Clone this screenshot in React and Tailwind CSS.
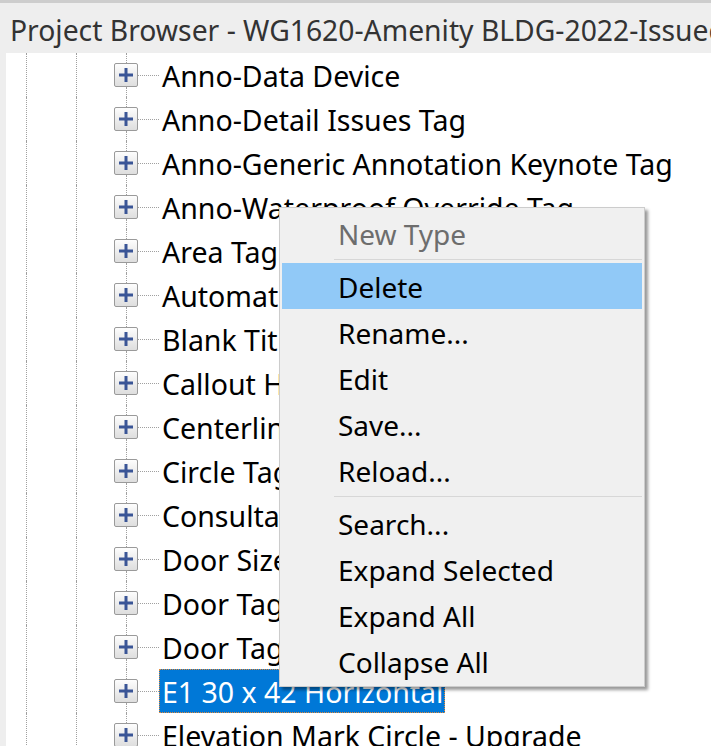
import React from "react";

const rows = [
  "Anno-Data Device",
  "Anno-Detail Issues Tag",
  "Anno-Generic Annotation Keynote Tag",
  "Anno-Waterproof Override Tag",
  "Area Tag",
  "Automatic Sheet Number",
  "Blank Title Block",
  "Callout Head",
  "Centerline",
  "Circle Tag",
  "Consultant Logo",
  "Door Size Tag",
  "Door Tag",
  "Door Tag - Small",
  "E1 30 x 42 Horizontal",
  "Elevation Mark Circle - Upgrade",
];

const font = { fontFamily: '"Segoe UI", "Noto Sans", "Open Sans", sans-serif' };

function PlusBox() {
  return (
    <div className="w-[24px] h-[24px] border border-[#9a9a9a] rounded-[2px] bg-gradient-to-b from-[#fdfdfd] to-[#dedede] flex items-center justify-center">
      <svg width="14" height="14" viewBox="0 0 14 14">
        <rect x="0" y="5.5" width="14" height="3" fill="#3a5596" />
        <rect x="5.5" y="0" width="3" height="14" fill="#3a5596" />
      </svg>
    </div>
  );
}

function Row({ label, selected }) {
  return (
    <div className="flex h-[44px] items-stretch">
      <div className="w-[20px]" />
      <div className="w-[50px] border-l border-dotted border-[#a0a0a0]" />
      <div className="w-[38px] border-l border-dotted border-[#a0a0a0]" />
      <div className="w-[24px] flex flex-col items-center">
        <div className="flex-1 border-l border-dotted border-[#a0a0a0]" />
        <PlusBox />
        <div className="flex-1 border-l border-dotted border-[#a0a0a0]" />
      </div>
      <div className="w-[21px] flex items-center">
        <div className="w-full border-t border-dotted border-[#a0a0a0]" />
      </div>
      <div
        className={
          "flex items-center whitespace-nowrap text-[28.5px] leading-none pl-[3px] pr-[2px] pt-[2px] " +
          (selected
            ? "bg-[#0078d7] text-white outline outline-1 outline-dotted outline-[#e38a3a] -outline-offset-1"
            : "text-black")
        }
      >
        {label}
      </div>
    </div>
  );
}

function MenuItem({ label, disabled, active }) {
  return (
    <div
      className={
        "h-[46px] flex items-center pl-[56px] pt-[2px] text-[28px] leading-none mx-[2px] " +
        (active ? "bg-[#91c9f7]" : "") +
        (disabled ? " text-[#6d6d6d]" : " text-black")
      }
    >
      {label}
    </div>
  );
}

function Sep() {
  return (
    <div className="h-[7px] flex items-center pl-[54px] pr-[2px]">
      <div className="h-[1px] w-full bg-[#d7d7d7]" />
    </div>
  );
}

export default function App() {
  return (
    <div className="w-[711px] h-[746px] overflow-hidden relative bg-[#eeeeee]" style={font}>
      <div className="h-[3px] bg-[#cdcdcd]" />
      <div className="h-[50px] bg-[#eeeeee] flex items-center pl-[10px] pt-[4px] text-[28.3px] text-[#333333] whitespace-nowrap leading-none">
        Project Browser - WG1620-Amenity BLDG-2022-Issued Model
      </div>
      <div className="flex">
        <div className="w-[6px] bg-[#eeeeee]" />
        <div className="flex-1 bg-white flex flex-col">
          {rows.map((r, i) => (
            <Row key={i} label={r} selected={i === 14} />
          ))}
        </div>
      </div>
      <div className="absolute left-[279px] top-[207px] w-[366px] bg-[#f0f0f0] border border-[#cccccc] py-[2px] shadow-[3px_3px_3px_rgba(0,0,0,0.4)]">
        <MenuItem label="New Type" disabled />
        <Sep />
        <MenuItem label="Delete" active />
        <MenuItem label="Rename..." />
        <MenuItem label="Edit" />
        <MenuItem label="Save..." />
        <MenuItem label="Reload..." />
        <Sep />
        <MenuItem label="Search..." />
        <MenuItem label="Expand Selected" />
        <MenuItem label="Expand All" />
        <MenuItem label="Collapse All" />
      </div>
    </div>
  );
}
